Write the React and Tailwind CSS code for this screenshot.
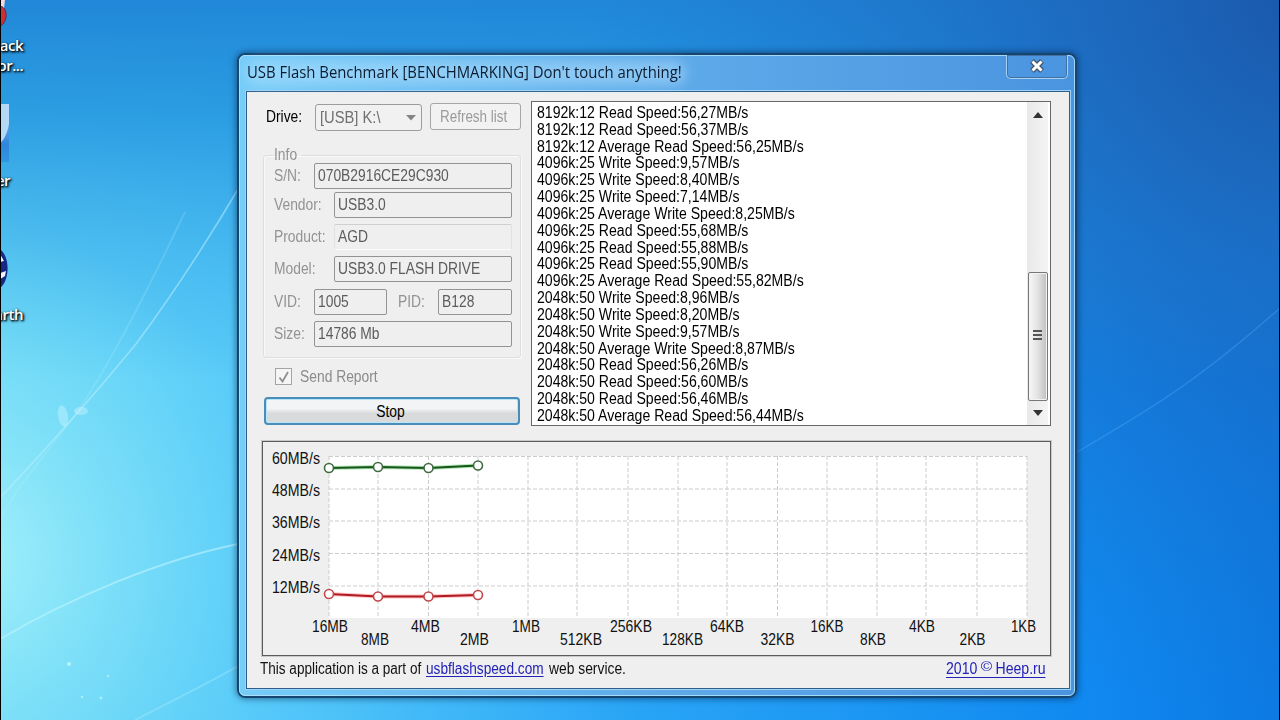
import { Fragment } from "react";

const logLines = [
  "8192k:12 Read Speed:56,27MB/s",
  "8192k:12 Read Speed:56,37MB/s",
  "8192k:12 Average Read Speed:56,25MB/s",
  "4096k:25 Write Speed:9,57MB/s",
  "4096k:25 Write Speed:8,40MB/s",
  "4096k:25 Write Speed:7,14MB/s",
  "4096k:25 Average Write Speed:8,25MB/s",
  "4096k:25 Read Speed:55,68MB/s",
  "4096k:25 Read Speed:55,88MB/s",
  "4096k:25 Read Speed:55,90MB/s",
  "4096k:25 Average Read Speed:55,82MB/s",
  "2048k:50 Write Speed:8,96MB/s",
  "2048k:50 Write Speed:8,20MB/s",
  "2048k:50 Write Speed:9,57MB/s",
  "2048k:50 Average Write Speed:8,87MB/s",
  "2048k:50 Read Speed:56,26MB/s",
  "2048k:50 Read Speed:56,60MB/s",
  "2048k:50 Read Speed:56,46MB/s",
  "2048k:50 Average Read Speed:56,44MB/s",
];

// label, grid line x, label centre x, label width
const blockSizes = [
  ["16MB", 329, 330, 36],
  ["8MB", 378, 375, 28],
  ["4MB", 428.5, 425.5, 29],
  ["2MB", 478, 474.5, 29],
  ["1MB", 528, 526, 28],
  ["512KB", 577, 581, 42],
  ["256KB", 628, 631, 42],
  ["128KB", 678, 682.5, 41],
  ["64KB", 727, 727, 34],
  ["32KB", 777.5, 777.5, 34],
  ["16KB", 827, 827, 33],
  ["8KB", 877, 873, 26],
  ["4KB", 926, 922, 26],
  ["2KB", 977, 972.5, 26],
  ["1KB", 1027, 1023.5, 25],
];

const speeds = [
  ["60MB/s", 456.5],
  ["48MB/s", 489],
  ["36MB/s", 521],
  ["24MB/s", 553.5],
  ["12MB/s", 586],
];

const series = [
  { dark: "#17551b", soft: "#7fd684", ring: "#3f6b41", points: [[329, 468], [378, 467], [428.5, 468], [478, 465.5]] },
  { dark: "#b01a22", soft: "#ff9a9a", ring: "#c2484c", points: [[329, 594], [378, 596.5], [428.5, 596.5], [478, 595]] },
];

function Text({ className = "", children }) {
  return (
    <span className={`inline-block origin-left scale-x-[.865] whitespace-nowrap ${className}`}>
      {children}
    </span>
  );
}

function Field({ value, className = "", faint }) {
  return (
    <div
      className={`flex h-[26px] items-center rounded-[2px] border pl-[3px] text-[#5c5c5c] ${
        faint ? "border-[#e2e2e2] border-t-[#cfcfcf] border-b-[#fafafa]" : "border-[#939393]"
      } ${className}`}
    >
      <Text>{value}</Text>
    </div>
  );
}

function InfoRow({ label, labelWidth, className = "", children }) {
  return (
    <div className={`flex items-center ${className}`}>
      <div className={`shrink-0 text-[#939393] ${labelWidth}`}>
        <Text>{label}</Text>
      </div>
      {children}
    </div>
  );
}

function Wallpaper() {
  return (
    <svg className="absolute inset-0" width="1280" height="720" viewBox="0 0 1280 720" fill="none">
      <defs>
        <linearGradient id="base" x1="0" y1="0" x2="1280" y2="0" gradientUnits="userSpaceOnUse">
          <stop offset="0" stopColor="#68d6f5" />
          <stop offset=".19" stopColor="#58cbf9" />
          <stop offset=".5" stopColor="#28a4f6" />
          <stop offset=".85" stopColor="#1089f0" />
          <stop offset="1" stopColor="#0c79e2" />
        </linearGradient>
        <linearGradient id="sky" x1="0" y1="0" x2="0" y2="380" gradientUnits="userSpaceOnUse">
          <stop offset="0" stopColor="#2187d8" />
          <stop offset=".3" stopColor="#2294de" stopOpacity=".85" />
          <stop offset=".65" stopColor="#2a9de4" stopOpacity=".42" />
          <stop offset="1" stopColor="#2b9ee6" stopOpacity="0" />
        </linearGradient>
        <radialGradient id="corner" cx="1300" cy="0" r="720" gradientUnits="userSpaceOnUse">
          <stop offset="0" stopColor="#1a58ab" />
          <stop offset=".3" stopColor="#1b63ba" stopOpacity=".8" />
          <stop offset="1" stopColor="#1c74cc" stopOpacity="0" />
        </radialGradient>
        <radialGradient id="glow" cx="-40" cy="560" r="330" gradientUnits="userSpaceOnUse">
          <stop offset="0" stopColor="#a6f2fb" />
          <stop offset="1" stopColor="#7ce0f8" stopOpacity="0" />
        </radialGradient>
      </defs>
      <rect width="1280" height="720" fill="url(#base)" />
      <rect width="1280" height="400" fill="url(#sky)" />
      <rect width="1280" height="720" fill="url(#corner)" />
      <rect width="1280" height="720" fill="url(#glow)" />
      <path d="M240 186C195 262 165 305 136 344C95 394 50 445 0 498" stroke="#b9efff" strokeOpacity=".55" strokeWidth="1.6" />
      <path d="M185 212C150 285 115 355 80 408C50 450 15 488 0 520" stroke="#c3f3ff" strokeOpacity=".18" strokeWidth="2" />
      <path d="M0 639C70 598 160 560 238 544" stroke="#c5f5ff" strokeOpacity=".55" strokeWidth="1.8" />
      <path d="M135 720C170 702 205 685 238 666" stroke="#b9efff" strokeOpacity=".35" strokeWidth="1.8" />
      <path d="M1077 452C1140 415 1190 388 1280 308" stroke="#5db4fb" strokeOpacity=".3" strokeWidth="1.5" />
      <ellipse cx="63" cy="416" rx="5" ry="11" fill="#c8f4ff" fillOpacity=".45" transform="rotate(-10 63 416)" />
      <ellipse cx="81" cy="411" rx="7" ry="4" fill="#c8f4ff" fillOpacity=".45" />
      <circle cx="69" cy="664" r="2" fill="#c8f8ff" fillOpacity=".8" />
      <circle cx="108" cy="676" r="1.6" fill="#c8f8ff" fillOpacity=".5" />
      <circle cx="82" cy="697" r="1.2" fill="#c8f8ff" fillOpacity=".7" />
      <circle cx="101" cy="698" r="1.4" fill="#c8f8ff" fillOpacity=".7" />
      {/* screen edges */}
      <path d="M.5 0V720M1279.500 0V720" stroke="#000" />
    </svg>
  );
}

function DesktopIcons() {
  const label =
    "absolute left-px w-7 overflow-hidden font-['Open_Sans',sans-serif] text-[15px] leading-5 font-semibold text-white [text-shadow:1px_1px_2px_#000,1px_1px_3px_#000]";
  return (
    <>
      <svg className="absolute top-0 left-px" width="12" height="300" viewBox="1 0 12 300">
        <defs>
          <linearGradient id="tile" x1="0" y1="0" x2="0" y2="1">
            <stop offset="0" stopColor="#8ec6f0" />
            <stop offset=".7" stopColor="#2f86dc" />
            <stop offset="1" stopColor="#2f97e2" />
          </linearGradient>
        </defs>
        <path d="M0 0H5L4 8L0 9Z" fill="#f3d9e2" />
        <path d="M0 6C5 7 6.500 12 6 17C5 22 3 25 0 26Z" fill="#cf3038" stroke="#6d2438" />
        <rect y="104" width="9" height="58" fill="url(#tile)" />
        <path d="M0 104H9V124C7 134 4 140 0 143Z" fill="#b4d9f6" />
        <path d="M0 249C5 253 8 261 7.500 270C7 279 4 285 0 288Z" fill="#142a86" />
        <path d="M0 254L4 261L0 262Z M0 273L6 271L5 276L0 279Z" fill="#eef4fb" />
      </svg>
      <div className={`${label} top-[35px] tracking-[-0.5px]`}>
        <div className="flex w-[22px] justify-end">ack</div>
        <div className="flex w-[22px] justify-end">or...</div>
      </div>
      <div className={`${label} top-[170px] tracking-[-0.5px]`}>
        <div className="flex w-[9px] justify-end">er</div>
      </div>
      <div className={`${label} top-[304px] tracking-[-0.5px]`}>
        <div className="flex w-[22px] justify-end">arth</div>
      </div>
    </>
  );
}

function TitleBar() {
  return (
    <div className="flex h-[37px] items-start justify-between">
      <div className="relative pt-[5px] pl-px">
        <div className="absolute top-[5px] left-0 h-[24px] w-[440px] rounded-full bg-[#b5e2ff]/50 blur-[6px]" />
        <span className="relative inline-block origin-left scale-x-[.93] font-['Open_Sans','Noto_Sans',sans-serif] text-[16px] leading-[22px] whitespace-nowrap text-[#0c1c30]">
          USB Flash Benchmark [BENCHMARKING] Don&apos;t touch anything!
        </span>
      </div>
      <button className="-mt-px flex h-[24px] w-[62px] items-center justify-center rounded-b-[5px] border border-t-0 border-[#a9d1f5] pb-px shadow-[inset_0_0_0_1px_#41719f]">
        <svg width="16" height="14" viewBox="0 0 16 14">
          <path d="M3 2L13 12M13 2L3 12" stroke="#44546a" strokeWidth="5.500" />
          <path d="M3.500 2.500L12.500 11.500M12.500 2.500L3.500 11.500" stroke="#fff" strokeWidth="3" />
        </svg>
      </button>
    </div>
  );
}

function DrivePanel() {
  return (
    <div className="flex w-[258px] shrink-0 flex-col">
      <div className="mt-px flex h-[28px] items-center pt-px pl-[3px]">
        <div className="w-[49px] text-black">
          <Text>Drive:</Text>
        </div>
        <div className="flex h-[27px] w-[107px] translate-y-px items-center justify-between rounded-[3px] border border-[#9c9c9c] bg-[#f1f1f1] pr-[5px] pl-1 text-[#707070]">
          <Text className="scale-x-[.92]!">[USB] K:\</Text>
          <svg width="10" height="6" viewBox="0 0 10 6">
            <path d="M0 0H10L5 5.500Z" fill="#858585" />
          </svg>
        </div>
        <button className="ml-[8px] flex h-[27px] w-[91px] items-center rounded-[3px] border border-[#a6a6a6] bg-[#f2f2f2] pl-[9px] text-[#9a9a9a]">
          <Text className="scale-x-[.84]!">Refresh list</Text>
        </button>
      </div>

      <fieldset className="mt-[16px] h-[212px] rounded-[3px] border border-[#dedede] pl-[10px] shadow-[inset_1px_1px_0_#f9f9f9,1px_1px_0_#f9f9f9]">
        <legend className="h-[18px] w-[27px] leading-[18px] text-[#939393]">
          <Text>Info</Text>
        </legend>
        <InfoRow label="S/N:" labelWidth="w-[40px]" className="-mt-px">
          <Field value="070B2916CE29C930" className="w-[198px]" />
        </InfoRow>
        <InfoRow label="Vendor:" labelWidth="w-[60px]" className="mt-[3px]">
          <Field value="USB3.0" className="w-[178px]" />
        </InfoRow>
        <InfoRow label="Product:" labelWidth="w-[60px]" className="mt-[6px]">
          <Field value="AGD" faint className="w-[178px]" />
        </InfoRow>
        <InfoRow label="Model:" labelWidth="w-[60px]" className="mt-[6px]">
          <Field value="USB3.0 FLASH DRIVE" className="w-[178px]" />
        </InfoRow>
        <InfoRow label="VID:" labelWidth="w-[40px]" className="mt-[7px]">
          <Field value="1005" className="w-[73px]" />
          <div className="ml-[11px] w-[40px] text-[#939393]">
            <Text>PID:</Text>
          </div>
          <Field value="B128" className="w-[74px]" />
        </InfoRow>
        <InfoRow label="Size:" labelWidth="w-[40px]" className="mt-[6px]">
          <Field value="14786 Mb" className="w-[198px]" />
        </InfoRow>
      </fieldset>

      <label className="mt-[9px] ml-[12px] flex h-[19px] items-center text-[#8b8b8b]">
        <span className="mr-[8px] flex size-[17px] items-center justify-center border border-[#a4a4a4] bg-[#f5f5f5]">
          <svg width="12" height="12" viewBox="0 0 12 12" fill="none">
            <path d="M1.500 6.500L4.500 10.500L10 1" stroke="#8f8f8f" strokeWidth="1.800" />
          </svg>
        </span>
        <Text>Send Report</Text>
      </label>

      <button className="mt-[11px] ml-px flex h-[28px] w-[256px] items-center justify-center rounded-[4px] border-2 border-[#4a8db8] bg-linear-to-b from-[#f2f4f5] from-40% to-[#d8dadc] to-60% pt-[2px] text-black shadow-[inset_0_0_0_1px_#b5e6fa]">
        <span className="-translate-x-[2px] scale-x-[.865]">Stop</span>
      </button>
    </div>
  );
}

function LogBox() {
  return (
    <div className="flex h-[325px] w-[520px] justify-between border border-[#686868] bg-white pr-[2px] text-black">
      <div className="pt-[2px] pl-[5px]">
        {logLines.map((line, i) => (
          <div key={i} className="h-[16.830px] leading-[17px]">
            <Text className="scale-x-[.88]!">{line}</Text>
          </div>
        ))}
      </div>
      <div className="flex w-[21px] flex-col items-center bg-linear-to-r from-[#e9e9e9] to-[#f4f4f4]">
        <svg className="mt-[10px]" width="10" height="6" viewBox="0 0 10 6">
          <path d="M0 6L5 0L10 6Z" fill="#333" />
        </svg>
        <div className="mt-[154px] flex h-[129px] w-[20px] flex-col items-center justify-center gap-[2px] rounded-[2px] border border-[#777] bg-linear-to-r from-[#f7f7f7] via-[#e2e2e2] to-[#bfbfbf] pb-[3px] shadow-[inset_0_0_0_1px_#f3f3f3]">
          <div className="h-[2px] w-[9px] bg-[#555]" />
          <div className="h-[2px] w-[9px] bg-[#555]" />
          <div className="h-[2px] w-[9px] bg-[#555]" />
        </div>
        <svg className="mt-[9px]" width="10" height="6" viewBox="0 0 10 6">
          <path d="M0 0H10L5 6Z" fill="#333" />
        </svg>
      </div>
    </div>
  );
}

function Chart() {
  return (
    <div className="mt-[15px] -ml-px h-[215px] w-[789px] border border-[#5c5c5c] shadow-[0_0_0_1px_#c9c9c9]">
      <svg width="787" height="213" viewBox="263 442 787 213" className="block font-['Liberation_Sans',Arial,sans-serif] text-[16px]">
        <rect x="329" y="456" width="698" height="162" fill="#fff" />
        <g stroke="#cccccc" strokeDasharray="4 2">
          {blockSizes.map(([label, x]) => (
            <path key={label} d={`M${x} 456V618`} />
          ))}
          {speeds.map(([label, y]) => (
            <path key={label} d={`M329 ${y}H1027`} />
          ))}
        </g>
        {speeds.map(([label, y]) => (
          <text key={label} x="272" y={y + 7} textLength="48" lengthAdjust="spacingAndGlyphs" fill="#111">
            {label}
          </text>
        ))}
        {blockSizes.map(([label, , cx, w], i) => (
          <text key={label} x={cx - w / 2} y={i % 2 ? 645 : 632} textLength={w} lengthAdjust="spacingAndGlyphs" fill="#111">
            {label}
          </text>
        ))}
        {series.map(({ dark, soft, ring, points }) => (
          <Fragment key={dark}>
            <polyline points={points.join(" ")} fill="none" stroke={soft} strokeWidth="4" strokeOpacity=".6" />
            <polyline points={points.join(" ")} fill="none" stroke={dark} strokeWidth="2.200" />
            {points.map(([x, y]) => (
              <circle key={x} cx={x} cy={y} r="4.500" fill="#fff" stroke={ring} strokeWidth="1.600" />
            ))}
          </Fragment>
        ))}
      </svg>
    </div>
  );
}

function Footer() {
  return (
    <div className="-ml-[3px] flex h-[26px] items-center text-[#111]">
      <div className="w-[166px]">
        <Text className="scale-x-[.847]!">This application is a part of</Text>
      </div>
      <a className="w-[123px] text-[#2222b8]">
        <Text className="scale-x-[.853]! underline underline-offset-2">usbflashspeed.com</Text>
      </a>
      <div className="w-[397px]">
        <Text>web service.</Text>
      </div>
      <a className="w-[100px] text-[#2222b8]">
        <Text className="h-[18px] scale-x-[.88]! border-b border-[#2222b8]">
          2010 <span className="inline-block -translate-y-[2px] scale-x-[1.1] scale-y-[.8]">©</span> Heep.ru
        </Text>
      </a>
    </div>
  );
}

export default function App() {
  return (
    <div className="relative h-[720px] w-[1280px] overflow-hidden bg-[#3fb0ee]">
      <Wallpaper />
      <DesktopIcons />

      <div className="absolute top-[53px] left-[237px] h-[645px] w-[840px] rounded-[8px] border-2 border-[#16466f] bg-linear-to-r from-[#76cdf8] via-[#5fabe9] to-[#4a94e0] font-['Liberation_Sans',Arial,sans-serif] text-[16px] leading-[18px] shadow-[0_0_6px_1px_rgba(0,25,60,.5)]">
        <div className="flex h-full flex-col rounded-[6px] border border-[#b5e6fd]/80 px-[6px]">
          <TitleBar />
          <div className="-mt-[2px] h-[598px] w-[824px] border border-[#2f5f88] bg-[#efefef] pt-[9px] pl-[16px] shadow-[0_0_0_1px_#9bd4f8]">
            <div className="flex gap-[10px]">
              <DrivePanel />
              <LogBox />
            </div>
            <Chart />
            <Footer />
          </div>
        </div>
      </div>
    </div>
  );
}
